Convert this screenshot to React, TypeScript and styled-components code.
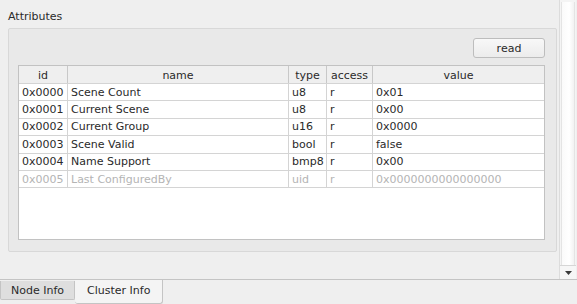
import React from "react";
import styled, { createGlobalStyle } from "styled-components";

const GlobalStyle = createGlobalStyle`
  * { box-sizing: border-box; }
  html, body { margin: 0; padding: 0; background: #efefef; }
  body {
    font-family: "DejaVu Sans", "Liberation Sans", sans-serif;
    font-size: 11px;
    color: #2a2a2a;
  }
`;

type Attr = { id: string; name: string; type: string; access: string; value: string; disabled?: boolean };

const attributes: Attr[] = [
  { id: "0x0000", name: "Scene Count", type: "u8", access: "r", value: "0x01" },
  { id: "0x0001", name: "Current Scene", type: "u8", access: "r", value: "0x00" },
  { id: "0x0002", name: "Current Group", type: "u16", access: "r", value: "0x0000" },
  { id: "0x0003", name: "Scene Valid", type: "bool", access: "r", value: "false" },
  { id: "0x0004", name: "Name Support", type: "bmp8", access: "r", value: "0x00" },
  { id: "0x0005", name: "Last ConfiguredBy", type: "uid", access: "r", value: "0x0000000000000000", disabled: true },
];

const COLS = "49px 221px 38px 46px 1fr";

const Window = styled.div`
  width: 577px;
  height: 304px;
  display: flex;
  flex-direction: column;
  background: #efefef;
  overflow: hidden;
`;

const ScrollArea = styled.div`
  height: 280px;
  display: flex;
  border-bottom: 1px solid #c4c4c4;
`;

const Content = styled.div`
  flex: 1;
  padding: 10px 0 0 8px;
  display: flex;
  flex-direction: column;
`;

const Label = styled.div`
  height: 18px;
  line-height: 13px;
`;

const GroupBox = styled.div`
  width: 549px;
  height: 224px;
  border: 1px solid #d8d8d8;
  border-radius: 2px;
  background: #e9e9e9;
  padding: 9px 11px 11px 9px;
  display: flex;
  flex-direction: column;
`;

const ButtonRow = styled.div`
  display: flex;
  justify-content: flex-end;
  height: 20px;
`;

const Button = styled.button`
  width: 72px;
  height: 20px;
  font: inherit;
  color: #2a2a2a;
  border: 1px solid #bdbdbd;
  border-radius: 3px;
  background: linear-gradient(#f8f8f8, #ececec);
  padding: 0;
`;

const Table = styled.div`
  margin-top: 7px;
  flex: 1;
  background: #ffffff;
  border: 1px solid #c2c2c2;
`;

const Row = styled.div<{ $header?: boolean }>`
  display: grid;
  grid-template-columns: ${COLS};
  height: ${(p) => (p.$header ? "18px" : "17.4px")};
  background: ${(p) => (p.$header ? "#efefef" : "#ffffff")};
  border-bottom: 1px solid #d4d4d4;
`;

const Cell = styled.div<{ $header?: boolean; $disabled?: boolean }>`
  display: flex;
  align-items: center;
  justify-content: ${(p) => (p.$header ? "center" : "flex-start")};
  padding: ${(p) => (p.$header ? "1px 3px 0" : "0 3px")};
  border-right: 1px solid ${(p) => (p.$header ? "#c8c8c8" : "#d4d4d4")};
  color: ${(p) => (p.$disabled ? "#b4b4b4" : "#2a2a2a")};
  white-space: nowrap;
  overflow: hidden;
  &:last-child { border-right: none; }
`;

const ScrollBar = styled.div`
  width: 17px;
  margin-right: 1px;
  display: flex;
  flex-direction: column;
  border-left: 1px solid #dcdcdc;
  background: #f4f4f4;
  padding-top: 2px;
`;

const Handle = styled.div`
  flex: 1;
  margin: 0 1px;
  background: linear-gradient(90deg, #fafafa, #ffffff 60%, #f2f2f2);
  border-left: 1px solid #e4e4e4;
  border-right: 1px solid #e4e4e4;
`;

const ArrowButton = styled.div`
  height: 14px;
  display: flex;
  align-items: center;
  justify-content: center;
  border-top: 1px solid #d6d6d6;
  background: #f6f6f6;
`;

const TabBar = styled.div`
  height: 24px;
  display: flex;
  align-items: flex-start;
`;

const Tab = styled.div<{ $active?: boolean }>`
  height: ${(p) => (p.$active ? "24px" : "19px")};
  margin-top: ${(p) => (p.$active ? "0" : "1px")};
  display: flex;
  align-items: center;
  padding: ${(p) => (p.$active ? "0 12px 2px 12px" : "0 10px")};
  background: ${(p) => (p.$active ? "#f4f4f4" : "#dedede")};
  border: 1px solid #c4c4c4;
  border-top: none;
  border-left: ${(p) => (p.$active ? "none" : "1px solid #c4c4c4")};
  border-radius: ${(p) => (p.$active ? "0 0 3px 3px" : "0 0 2px 2px")};
`;

export default function App() {
  return (
    <>
      <GlobalStyle />
      <Window>
        <ScrollArea>
          <Content>
            <Label>Attributes</Label>
            <GroupBox>
              <ButtonRow>
                <Button>read</Button>
              </ButtonRow>
              <Table>
                <Row $header>
                  {["id", "name", "type", "access", "value"].map((h) => (
                    <Cell $header key={h}>{h}</Cell>
                  ))}
                </Row>
                {attributes.map((a) => (
                  <Row key={a.id}>
                    <Cell $disabled={a.disabled}>{a.id}</Cell>
                    <Cell $disabled={a.disabled}>{a.name}</Cell>
                    <Cell $disabled={a.disabled}>{a.type}</Cell>
                    <Cell $disabled={a.disabled}>{a.access}</Cell>
                    <Cell $disabled={a.disabled}>{a.value}</Cell>
                  </Row>
                ))}
              </Table>
            </GroupBox>
          </Content>
          <ScrollBar>
            <Handle />
            <ArrowButton>
              <svg width="7" height="4" viewBox="0 0 7 4">
                <path d="M0 0 H7 L3.5 4 Z" fill="#3a3a3a" />
              </svg>
            </ArrowButton>
          </ScrollBar>
        </ScrollArea>
        <TabBar>
          <Tab>Node Info</Tab>
          <Tab $active>Cluster Info</Tab>
        </TabBar>
      </Window>
    </>
  );
}
